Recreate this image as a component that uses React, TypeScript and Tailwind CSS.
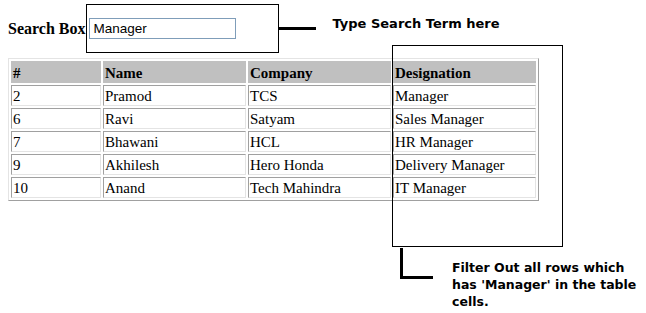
const ROWS = [
  ["2", "Pramod", "TCS", "Manager"],
  ["6", "Ravi", "Satyam", "Sales Manager"],
  ["7", "Bhawani", "HCL", "HR Manager"],
  ["9", "Akhilesh", "Hero Honda", "Delivery Manager"],
  ["10", "Anand", "Tech Mahindra", "IT Manager"],
];

const serif = "font-['Liberation_Serif','Times_New_Roman',serif]";
const note = "font-['DejaVu_Sans',Verdana,sans-serif] font-bold text-black whitespace-nowrap";

export default function App() {
  return (
    <div className={`relative w-[646px] h-[313px] bg-white text-black ${serif}`}>
      <div className="pl-2 pt-[4px]">
        {/* search row */}
        <div className="flex items-start">
          <label className="mt-[14px] text-base font-bold leading-[21px] mr-[1px]">Search Box</label>
          <div className="w-[193px] h-[49px] border border-black pt-[11px] pl-[2px]">
            <input
              defaultValue="Manager"
              className="w-[147px] h-[21px] border border-[#7f9db9] pl-[3px] text-[13.5px] font-['Liberation_Sans',Arial,sans-serif] text-black outline-none"
            />
          </div>
          <div className="mt-[23px] w-[37px] h-[3px] bg-black" />
          <div className={`ml-[16px] mt-[10px] text-[13px] ${note}`}>Type Search Term here</div>
        </div>

        <table className="mt-[5px] w-[531px] table-fixed border-separate border-spacing-[2px] border border-t-[#e4e4e4] border-l-[#e4e4e4] border-b-[#a0a0a0] border-r-[#a0a0a0] text-[15px]">
          <colgroup>
            <col className="w-[90px]" />
            <col className="w-[143px]" />
            <col className="w-[143px]" />
            <col className="w-[143px]" />
          </colgroup>
          <thead>
            <tr>
              {["#", "Name", "Company", "Designation"].map((h) => (
                <th
                  key={h}
                  className="h-[22px] bg-[#c0c0c0] border border-[#c0c0c0] px-[1px] pt-[2px] pb-0 text-left font-bold leading-none"
                >
                  {h}
                </th>
              ))}
            </tr>
          </thead>
          <tbody>
            {ROWS.map((r) => (
              <tr key={r[0]}>
                {r.map((c, i) => (
                  <td
                    key={i}
                    className="h-[21px] border border-t-[#a0a0a0] border-l-[#a0a0a0] border-b-[#e4e4e4] border-r-[#e4e4e4] px-[1px] pt-[2px] pb-0 leading-none whitespace-nowrap"
                  >
                    {c}
                  </td>
                ))}
              </tr>
            ))}
          </tbody>
        </table>
      </div>

      {/* callout over the Designation column */}
      <div className="absolute left-[392px] top-[45px] flex flex-col pointer-events-none">
        <div className="w-[171px] h-[202px] border border-black" />
        <div className="flex items-start">
          <div className="ml-[8px] mt-[1px] w-[33px] h-[31px] border-l-[3px] border-b-[3px] border-black" />
          <div className={`ml-[19px] mt-[12px] text-[12.5px] leading-[17px] ${note}`}>
            Filter Out all rows which
            <br />
            has 'Manager' in the table
            <br />
            cells.
          </div>
        </div>
      </div>
    </div>
  );
}
